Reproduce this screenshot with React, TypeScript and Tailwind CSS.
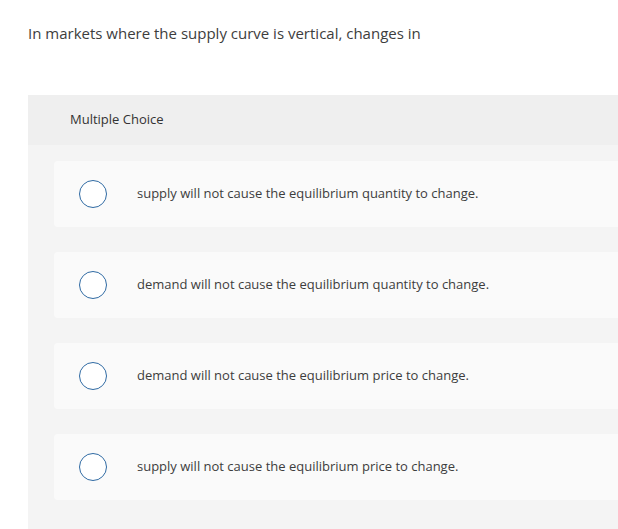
const options = [
  'supply will not cause the equilibrium quantity to change.',
  'demand will not cause the equilibrium quantity to change.',
  'demand will not cause the equilibrium price to change.',
  'supply will not cause the equilibrium price to change.',
];

export default function App() {
  return (
    <div className="min-h-[529px] w-[618px] overflow-hidden bg-white font-['Open_Sans',sans-serif] text-[#333]">
      <p className="px-[28px] pt-[23px] text-[15px] leading-[20px] text-[#3d3d3d]">
        In markets where the supply curve is vertical, changes in
      </p>

      <div className="ml-[28px] mt-[52px] w-[620px]">
        <div className="flex h-[50px] items-center bg-[#efefef] pl-[42px] text-[13px] text-[#333]">
          Multiple Choice
        </div>
        <div className="flex flex-col gap-[25px] bg-[#f4f4f4] pb-[30px] pl-[26px] pt-[16px]">
          {options.map((text) => (
            <label
              key={text}
              className="flex h-[66px] items-center rounded-[4px] bg-[#fafafa] pl-[25px]"
            >
              <span className="h-[28px] w-[28px] shrink-0 rounded-full border-[1.5px] border-[#2f6aa3] bg-white" />
              <span className="ml-[30px] text-[13px] text-[#3d3d3d]">{text}</span>
            </label>
          ))}
        </div>
      </div>
    </div>
  );
}
